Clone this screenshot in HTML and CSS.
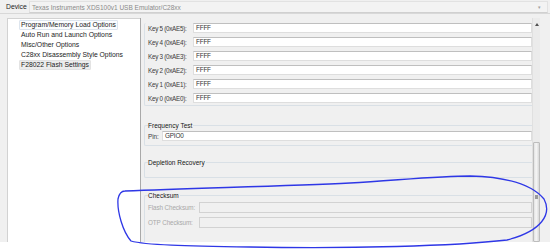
FILE: index.html
```html
<!DOCTYPE html>
<html>
<head>
<meta charset="utf-8">
<link rel="stylesheet" href="styles.css">
</head>
<body>
<div class="app">
  <div class="topbar">
    <span class="dev-label">Device</span>
    <div class="combo"><span>Texas Instruments XDS100v1 USB Emulator/C28xx</span><span class="arrow">&#9662;</span></div>
  </div>
  <div class="main">
    <div class="tree">
      <div class="item sel">Program/Memory Load Options</div>
      <div class="item">Auto Run and Launch Options</div>
      <div class="item">Misc/Other Options</div>
      <div class="item">C28xx Disassembly Style Options</div>
      <div class="item hl">F28022 Flash Settings</div>
    </div>
    <div class="panel">
      <div class="content">
        <div class="group keys">
          <div class="row"><span class="lbl">Key 5 (0xAE5):</span><div class="inp">FFFF</div></div>
          <div class="row"><span class="lbl">Key 4 (0xAE4):</span><div class="inp">FFFF</div></div>
          <div class="row"><span class="lbl">Key 3 (0xAE3):</span><div class="inp">FFFF</div></div>
          <div class="row"><span class="lbl">Key 2 (0xAE2):</span><div class="inp">FFFF</div></div>
          <div class="row"><span class="lbl">Key 1 (0xAE1):</span><div class="inp">FFFF</div></div>
          <div class="row"><span class="lbl">Key 0 (0xAE0):</span><div class="inp">FFFF</div></div>
        </div>
        <div class="group freq">
          <div class="title">Frequency Test</div>
          <div class="row pin"><span class="lbl short">Pin:</span><div class="inp">GPIO0</div></div>
        </div>
        <div class="group depl">
          <div class="title">Depletion Recovery</div>
        </div>
        <div class="group checks">
          <div class="title">Checksum</div>
          <div class="row dis"><span class="lbl wide">Flash Checksum:</span><div class="inp"></div></div>
          <div class="row dis"><span class="lbl wide">OTP Checksum:</span><div class="inp"></div></div>
        </div>
      </div>
      <div class="scrollbar">
        <div class="up"><span class="tri"></span></div>
        <div class="track"></div>
        <div class="thumb"><span class="grip"></span></div>
      </div>
    </div>
  </div>
</div>
<svg class="annotation" width="550" height="249" viewBox="0 0 550 249">
  <path d="M 125 191 C 200 188, 290 186, 350 183 C 400 180, 440 176, 470 176 C 510 177, 533 186, 544 199 C 552 214, 542 231, 507 240 C 455 246, 350 249, 250 247 C 185 246, 145 245, 131 241 C 123 232, 117 212, 118 199 C 119 194, 121 191, 125 191 Z" fill="none" stroke="#2e37e6" stroke-width="1.3"/>
</svg>
</body>
</html>
```
FILE: styles.css
```css
* { box-sizing: border-box; margin: 0; padding: 0; }
html, body { background: #ffffff; }
body {
  width: 550px;
  height: 249px;
  overflow: hidden;
  position: relative;
  font-family: "Liberation Sans", Arial, sans-serif;
  color: #2b2b2b;
}
.app {
  height: 242px;
  background: #f0f0f0;
  display: flex;
  flex-direction: column;
}
.topbar {
  height: 14px;
  border-bottom: 1px solid #d8d8d8;
  display: flex;
  align-items: flex-start;
  padding: 1px 2px 0 6px;
}
.dev-label {
  width: 23px;
  font-size: 6.8px;
  line-height: 12px;
  color: #1e1e1e;
}
.combo {
  flex: 1;
  height: 12px;
  border: 1px solid #e2e2e2;
  border-bottom-color: #d0d0d0;
  background: #f3f3f3;
  display: flex;
  align-items: center;
  padding-left: 2px;
  font-size: 6.5px;
  color: #8a8a8a;
  white-space: nowrap;
}
.arrow {
  margin-left: auto;
  width: 9px;
  font-size: 5px;
  color: #a0a0a0;
}
.main {
  display: flex;
  margin-top: 4px;
  flex: 1;
  min-height: 0;
}
.tree {
  margin-left: 7px;
  width: 133px;
  background: #ffffff;
  border-left: 1px solid #d2d2d2;
  border-top: 1px solid #d2d2d2;
  padding-top: 1px;
  display: flex;
  flex-direction: column;
  align-items: flex-start;
}
.item {
  margin-left: 11px;
  height: 10px;
  line-height: 8px;
  padding: 0 1px;
  font-size: 6.8px;
  color: #1c1c1c;
  white-space: nowrap;
  border: 1px solid transparent;
  border-radius: 1px;
}
.item.sel { border-color: #dde5ee; background: #fbfdff; }
.item.hl { background: #ececec; border-color: #e3e3e3; }
.panel {
  width: 400px;
  display: flex;
  border-left: 1px solid #a9a9a9;
  overflow: hidden;
}
.content {
  flex: 1;
  padding: 5px 0 0 3px;
  overflow: hidden;
  display: flex;
  flex-direction: column;
}
.group {
  border: 1px solid #d9e0e6;
  border-right: none;
  border-radius: 2px 0 0 2px;
  padding: 0 0 0 3px;
  display: flex;
  flex-direction: column;
  flex-shrink: 0;
}
.keys {
  border-top: none;
  padding-bottom: 2px;
  gap: 4px;
}
.freq { margin-top: 19px; padding-bottom: 4px; }
.depl { margin-top: 16px; padding-bottom: 10px; }
.checks { margin-top: 17px; padding-bottom: 20px; gap: 4px; }
.title {
  margin-top: -5px;
  height: 9px;
  line-height: 9px;
  font-size: 6.5px;
  color: #151515;
  align-self: flex-start;
  background: #f0f0f0;
  padding-right: 1px;
}
.checks .title { margin-bottom: -2px; }
.row {
  display: flex;
  align-items: center;
  height: 10px;
}
.pin { margin-top: 1px; }
.checks .row { height: 11px; }
.lbl {
  width: 45px;
  flex-shrink: 0;
  font-size: 6.3px;
  letter-spacing: -0.28px;
  white-space: nowrap;
  color: #3a3a3a;
}
.lbl.short { width: 14px; letter-spacing: 0; }
.lbl.wide { width: 51px; letter-spacing: -0.1px; }
.inp {
  flex: 1;
  height: 100%;
  background: #ffffff;
  border: 1px solid #dedede;
  border-top-color: #bfbfbf;
  font-size: 6.4px;
  line-height: 8px;
  padding-left: 2px;
  color: #333333;
  letter-spacing: -0.2px;
}
.dis .lbl { color: #a8a8a8; }
.dis .inp { background: #f0f0f0; border-color: #d2d2d2; }
.scrollbar {
  width: 8px;
  flex-shrink: 0;
  background: #ebebeb;
  border-left: 1px solid #e0e0e0;
  display: flex;
  flex-direction: column;
}
.up {
  height: 12px;
  display: flex;
  align-items: center;
  justify-content: center;
}
.tri {
  width: 0;
  height: 0;
  border-left: 2px solid transparent;
  border-right: 2px solid transparent;
  border-bottom: 3px solid #505050;
}
.track { flex: 1; }
.thumb {
  height: 100px;
  background: linear-gradient(90deg, #e2e2e2, #f6f6f6 45%, #d8d8d8);
  border: 1px solid #bdbdbd;
  border-radius: 1px;
  display: flex;
  justify-content: center;
  padding-top: 52px;
}
.grip {
  width: 3px;
  height: 4px;
  background: #9a9a9a;
}
.annotation {
  position: absolute;
  left: 0;
  top: 0;
  pointer-events: none;
}
```
